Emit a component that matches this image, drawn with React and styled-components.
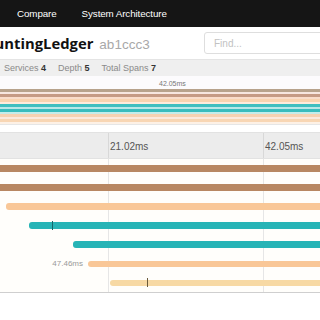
import React from 'react';
import styled, { createGlobalStyle } from 'styled-components';

const GlobalStyle = createGlobalStyle`
    html, body {
        margin: 0;
        padding: 0;
        background: #fff;
        font-family: "Liberation Sans", Arial, sans-serif;
        overflow: hidden;
    }
`;

const Page = styled.div`
    width: 320px;
    height: 320px;
    overflow: hidden;
    background: #fff;
`;

const Nav = styled.div`
    height: 27px;
    background: #151515;
    display: flex;
    align-items: center;
    gap: 25px;
    padding-left: 17px;
    color: #fff;
    font-size: 9.8px;
    letter-spacing: -0.1px;
`;

const TitleBar = styled.div`
    height: 32px;
    display: flex;
    align-items: center;
    justify-content: space-between;
    border-bottom: 1px solid #e4e4e4;
    overflow: hidden;
`;

const Title = styled.div`
    display: flex;
    align-items: baseline;
    gap: 6px;
    margin-left: -40px;
    white-space: nowrap;
    h1 {
        margin: 0;
        font-family: "Open Sans", sans-serif;
        font-weight: 700;
        font-size: 14.8px;
        color: #111;
    }
    span {
        font-size: 13.5px;
        color: #a8a8a8;
    }
`;

const Find = styled.div`
    width: 109px;
    height: 20px;
    margin-right: -4px;
    border: 1px solid #dedede;
    border-radius: 3px;
    display: flex;
    align-items: center;
    padding-left: 9px;
    font-size: 10px;
    color: #c2c2c2;
`;

const Stats = styled.div`
    height: 16px;
    background: #efefef;
    display: flex;
    align-items: center;
    gap: 12px;
    padding-left: 4px;
    font-size: 9px;
    color: #8a8a8a;
    b {
        color: #333;
    }
`;

const Minimap = styled.div`
    border-bottom: 1px solid #e6e6e6;
    background: linear-gradient(#9c9c9c, #9c9c9c) 160px 0 / 1px 100% no-repeat;
`;

const MiniLabel = styled.div`
    height: 13px;
    background: #fcfbfd;
    font-size: 7px;
    color: #777;
    padding-left: 159px;
    line-height: 15px;
`;

const MiniRow = styled.div`
    height: 5px;
    background: ${p => p.$light};
    border-top: 3px solid ${p => p.$color};
    box-sizing: border-box;
`;

const Gap = styled.div`
    height: 7px;
`;

const Ruler = styled.div`
    height: 27px;
    background: #ececec;
    border-top: 1px solid #e2e2e2;
    border-bottom: 1px solid #e2e2e2;
    box-sizing: border-box;
    position: relative;
    font-size: 10px;
    color: #555;
    background-image: linear-gradient(#d8d8d8, #d8d8d8), linear-gradient(#d8d8d8, #d8d8d8);
    background-size: 1px 100%, 1px 100%;
    background-position: 108px 0, 263px 0;
    background-repeat: no-repeat;
`;

const Tick = styled.span`
    position: absolute;
    left: ${p => p.$x}px;
    top: 8px;
`;

const Rows = styled.div`
    background-color: #fffefb;
    background-image: linear-gradient(#e6e6e6, #e6e6e6), linear-gradient(#e6e6e6, #e6e6e6);
    background-size: 1px 100%, 1px 100%;
    background-position: 108px 0, 263px 0;
    background-repeat: no-repeat;
    border-bottom: 1px solid #cfcfcf;
`;

const Row = styled.div`
    height: 19px;
    display: flex;
    align-items: center;
    position: relative;
`;

const Bar = styled.div`
    flex: 1;
    height: ${p => p.$h || 7}px;
    background: ${p => p.$color};
    border-radius: ${p => (p.$open ? '0' : '3px 0 0 3px')};
`;

const Label = styled.span`
    position: absolute;
    font-size: 8px;
    color: #9a9a9a;
    text-align: right;
    width: 60px;
`;

const Mark = styled.span`
    position: absolute;
    top: 5px;
    width: 1px;
    height: 9px;
    background: ${p => p.$color};
`;

const BROWN = '#b88762';
const PEACH = '#f9c797';
const TEAL = '#27b4b6';
const SAND = '#f7d9a4';

const mini = [
    ['#b7a28c', '#f6e6e0'],
    ['#c59a85', '#f9dccb'],
    ['#f8d3b0', '#fdebdc'],
    ['#3fbfc0', '#b9e8e8'],
    ['#3bbcbd', '#c7ecea'],
    ['#f8d2b2', '#fdeadf'],
    ['#f8d6b4', '#fdf1e6'],
];

const spans = [
    { x: 0, color: BROWN, open: true },
    { x: 0, color: BROWN, open: true },
    { x: 6, color: PEACH },
    { x: 29, color: TEAL, mark: 52, markColor: '#13686a' },
    { x: 73, color: TEAL },
    { x: 88, color: PEACH, h: 6, label: '47.46ms' },
    { x: 110, color: SAND, h: 6, mark: 147, markColor: '#6b5a3a' },
];

const App = () => {
    return <Page>
        <GlobalStyle />
        <Nav>
            <span>Compare</span>
            <span>System Architecture</span>
        </Nav>
        <TitleBar>
            <Title>
                <h1>AccountingLedger</h1>
                <span>ab1ccc3</span>
            </Title>
            <Find>Find...</Find>
        </TitleBar>
        <Stats>
            <span>Services <b>4</b></span>
            <span>Depth <b>5</b></span>
            <span>Total Spans <b>7</b></span>
        </Stats>
        <Minimap>
            <MiniLabel>42.05ms</MiniLabel>
            {mini.map((m, i) => <MiniRow key={i} $color={m[0]} $light={m[1]} />)}
        </Minimap>
        <Gap />
        <Ruler>
            <Tick $x={110}>21.02ms</Tick>
            <Tick $x={265}>42.05ms</Tick>
        </Ruler>
        <Rows>
            {spans.map((s, i) => (
                <Row key={i} style={{ paddingLeft: s.x }}>
                    {s.label && <Label style={{ left: s.x - 65 }}>{s.label}</Label>}
                    <Bar $color={s.color} $open={s.open} $h={s.h} />
                    {s.mark && <Mark $color={s.markColor} style={{ left: s.mark }} />}
                </Row>
            ))}
        </Rows>
    </Page>;
};

export default App;
